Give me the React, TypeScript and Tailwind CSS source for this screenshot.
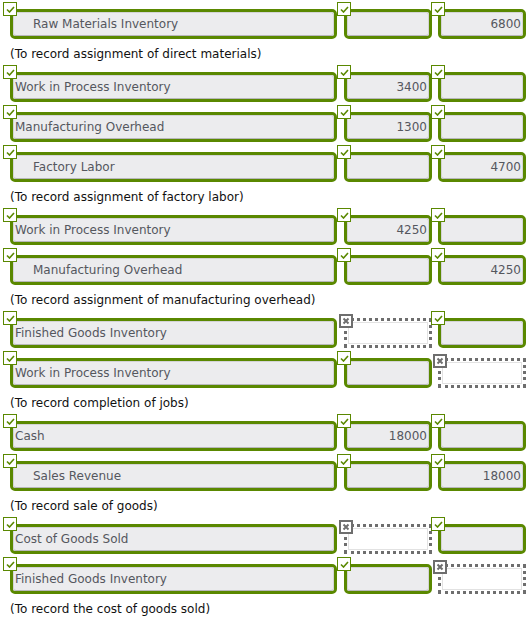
import type { ReactNode } from 'react';

type Cell = { text?: string; wrong?: boolean };
type Line = { account: string; indent?: boolean; debit: Cell; credit: Cell };
type Entry = { lines: Line[]; note: string };

const entries: Entry[] = [
  {
    lines: [{ account: 'Raw Materials Inventory', indent: true, debit: {}, credit: { text: '6800' } }],
    note: '(To record assignment of direct materials)',
  },
  {
    lines: [
      { account: 'Work in Process Inventory', debit: { text: '3400' }, credit: {} },
      { account: 'Manufacturing Overhead', debit: { text: '1300' }, credit: {} },
      { account: 'Factory Labor', indent: true, debit: {}, credit: { text: '4700' } },
    ],
    note: '(To record assignment of factory labor)',
  },
  {
    lines: [
      { account: 'Work in Process Inventory', debit: { text: '4250' }, credit: {} },
      { account: 'Manufacturing Overhead', indent: true, debit: {}, credit: { text: '4250' } },
    ],
    note: '(To record assignment of manufacturing overhead)',
  },
  {
    lines: [
      { account: 'Finished Goods Inventory', debit: { wrong: true }, credit: {} },
      { account: 'Work in Process Inventory', debit: {}, credit: { wrong: true } },
    ],
    note: '(To record completion of jobs)',
  },
  {
    lines: [
      { account: 'Cash', debit: { text: '18000' }, credit: {} },
      { account: 'Sales Revenue', indent: true, debit: {}, credit: { text: '18000' } },
    ],
    note: '(To record sale of goods)',
  },
  {
    lines: [
      { account: 'Cost of Goods Sold', debit: { wrong: true }, credit: {} },
      { account: 'Finished Goods Inventory', debit: {}, credit: { wrong: true } },
    ],
    note: '(To record the cost of goods sold)',
  },
];

const CheckMark = () => (
  <span className="absolute -left-[7px] -top-[7px] z-10 flex h-[14px] w-[14px] items-center justify-center border border-[#5a8800] bg-white">
    <svg width="9" height="7" viewBox="0 0 9 7">
      <path d="M1 3.5 L3.5 6 L8 1" fill="none" stroke="#5a8800" strokeWidth="1.6" />
    </svg>
  </span>
);

const CrossMark = () => (
  <span className="absolute -left-[5px] -top-[4px] z-10 flex h-[14px] w-[14px] items-center justify-center border-2 border-[#6e6e6e] bg-white">
    <svg width="8" height="8" viewBox="0 0 8 8">
      <path d="M1.5 1.5 L6.5 6.5 M6.5 1.5 L1.5 6.5" fill="none" stroke="#6e6e6e" strokeWidth="2" />
    </svg>
  </span>
);

const Box = ({ width, wrong, children }: { width: string; wrong?: boolean; children?: ReactNode }) =>
  wrong ? (
    <div className={`relative h-[30px] ${width}`}>
      <CrossMark />
      <div className="h-full w-full border-[3px] border-dotted border-[#6e6e6e] bg-white p-px">
        <div className="h-full w-full border border-[#e2e2e2]" />
      </div>
    </div>
  ) : (
    <div className={`relative h-[30px] ${width}`}>
      <CheckMark />
      <div className="h-full w-full rounded-[5px] border-[3px] border-[#5a8800] bg-[#ececee]">
        <div className="flex h-full w-full items-center rounded-[3px] border border-[#d4d4d6] border-b-[#b8b8ba]">
          {children}
        </div>
      </div>
    </div>
  );

export default function App() {
  return (
    <div className="min-h-[619px] w-[530px] bg-white pl-[10px] pt-[9px] font-['DejaVu_Sans',Verdana,sans-serif] text-[12px]">
      {entries.map((entry, i) => (
        <div key={i} className="flex flex-col">
          {entry.lines.map((line, j) => (
            <div key={j} className={`flex ${j > 0 ? 'mt-[10px]' : ''}`}>
              <Box width="w-[327px]">
                <span className={`text-[#55575e] ${line.indent ? 'pl-[19px]' : 'pl-[1px]'}`}>{line.account}</span>
              </Box>
              <div className="ml-[7px]">
                <Box width="w-[88px]" wrong={line.debit.wrong}>
                  <span className="flex-1 pr-[1px] text-right text-[#55575e]">{line.debit.text}</span>
                </Box>
              </div>
              <div className="ml-[6px]">
                <Box width="w-[88px]" wrong={line.credit.wrong}>
                  <span className="flex-1 pr-[1px] text-right text-[#55575e]">{line.credit.text}</span>
                </Box>
              </div>
            </div>
          ))}
          <div className="mb-[7px] mt-[3px] flex h-[23px] items-center text-[#111]">{entry.note}</div>
        </div>
      ))}
    </div>
  );
}
